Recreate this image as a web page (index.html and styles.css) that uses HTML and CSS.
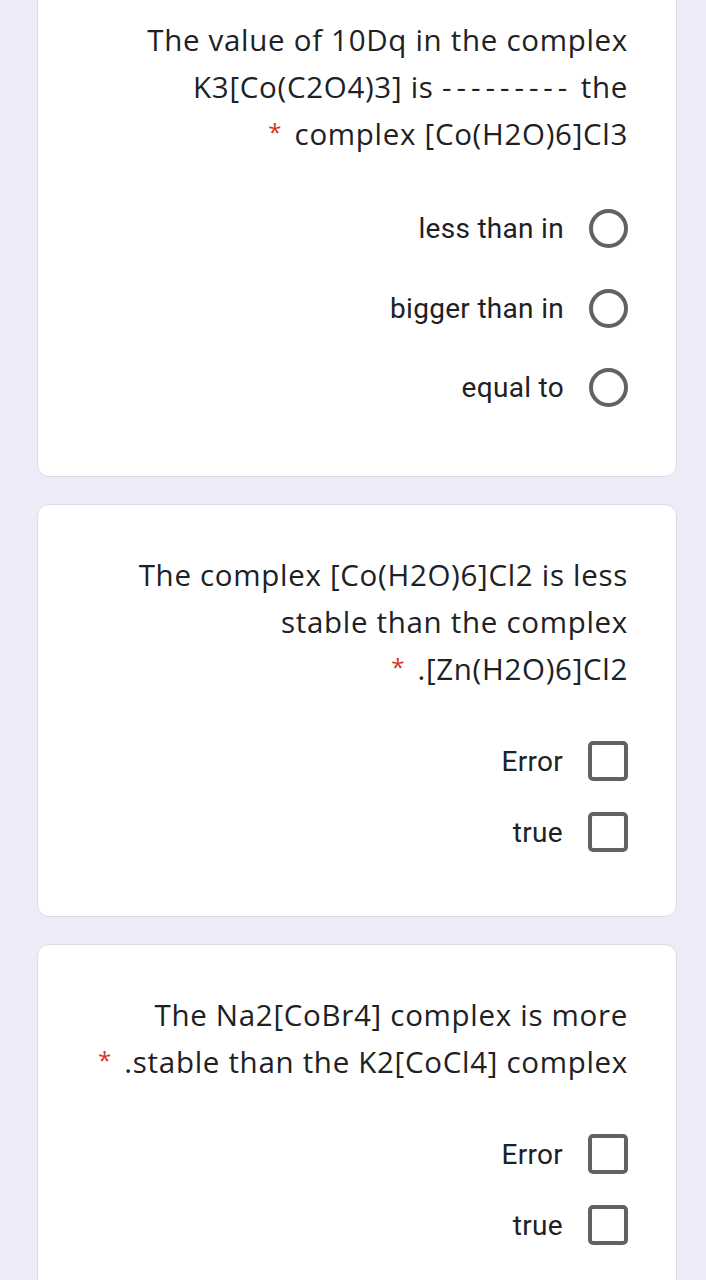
FILE: index.html
```html
<!DOCTYPE html>
<html lang="en">
<head>
<meta charset="utf-8">
<title>Form</title>
<link rel="stylesheet" href="styles.css">
</head>
<body>
<main class="form">
  <section class="card card-first">
    <div class="question">
      <span class="line">The value of 10Dq in the complex</span>
      <span class="line">K3[Co(C2O4)3] is <span class="dashes">---------</span> the</span>
      <span class="line"><span class="req">*</span> complex [Co(H2O)6]Cl3</span>
    </div>
    <div class="options">
      <label class="opt radio-row"><span class="opt-text">less than in</span><span class="radio"></span></label>
      <label class="opt radio-row"><span class="opt-text">bigger than in</span><span class="radio"></span></label>
      <label class="opt radio-row"><span class="opt-text">equal to</span><span class="radio"></span></label>
    </div>
  </section>

  <section class="card">
    <div class="question">
      <span class="line">The complex [Co(H2O)6]Cl2 is less</span>
      <span class="line">stable than the complex</span>
      <span class="line"><span class="req">*</span> .[Zn(H2O)6]Cl2</span>
    </div>
    <div class="options options-check">
      <label class="opt check-row"><span class="opt-text">Error</span><span class="check"></span></label>
      <label class="opt check-row"><span class="opt-text">true</span><span class="check"></span></label>
    </div>
  </section>

  <section class="card">
    <div class="question">
      <span class="line">The Na2[CoBr4] complex is more</span>
      <span class="line"><span class="req">*</span> .stable than the K2[CoCl4] complex</span>
    </div>
    <div class="options options-check">
      <label class="opt check-row"><span class="opt-text">Error</span><span class="check"></span></label>
      <label class="opt check-row"><span class="opt-text">true</span><span class="check"></span></label>
    </div>
  </section>
</main>
</body>
</html>
```

FILE: styles.css
```css
html, body {
  margin: 0;
  padding: 0;
  background: #efebf8;
}
body {
  height: 1280px;
  overflow: hidden;
}
.form {
  display: flex;
  flex-direction: column;
  gap: 27px;
  padding: 0 29px 0 37px;
}
.card {
  background: #ffffff;
  border: 1px solid #dadce0;
  border-radius: 12px;
  padding: 46px 48px 48px 48px;
}
.card-first {
  margin-top: -31px;
}
.question {
  display: flex;
  flex-direction: column;
  align-items: flex-end;
  font-family: "Open Sans", "Noto Sans", sans-serif;
  font-size: 29.5px;
  line-height: 47px;
  color: #202124;
  letter-spacing: 0.7px;
  margin-bottom: 32px;
}
.line {
  display: block;
  height: 47px;
  white-space: nowrap;
}
.dashes {
  letter-spacing: 5px;
}
.req {
  color: #d93025;
  font-size: 24px;
  line-height: 1;
  vertical-align: 4px;
  margin-right: 4px;
}
.options {
  display: flex;
  flex-direction: column;
}
.options-check {
  padding-top: 2px;
}
.opt {
  display: flex;
  justify-content: flex-end;
  align-items: center;
  gap: 25px;
  font-family: Roboto, "Liberation Sans", sans-serif;
  font-size: 28px;
  letter-spacing: 0.3px;
  color: #202124;
}
.radio-row {
  height: 79.5px;
}
.check-row {
  height: 71px;
}
.radio {
  width: 31px;
  height: 31px;
  border: 4px solid #5f6368;
  border-radius: 50%;
  flex: none;
}
.check {
  width: 32px;
  height: 32px;
  border: 4px solid #5f6368;
  border-radius: 5px;
  flex: none;
}
```
